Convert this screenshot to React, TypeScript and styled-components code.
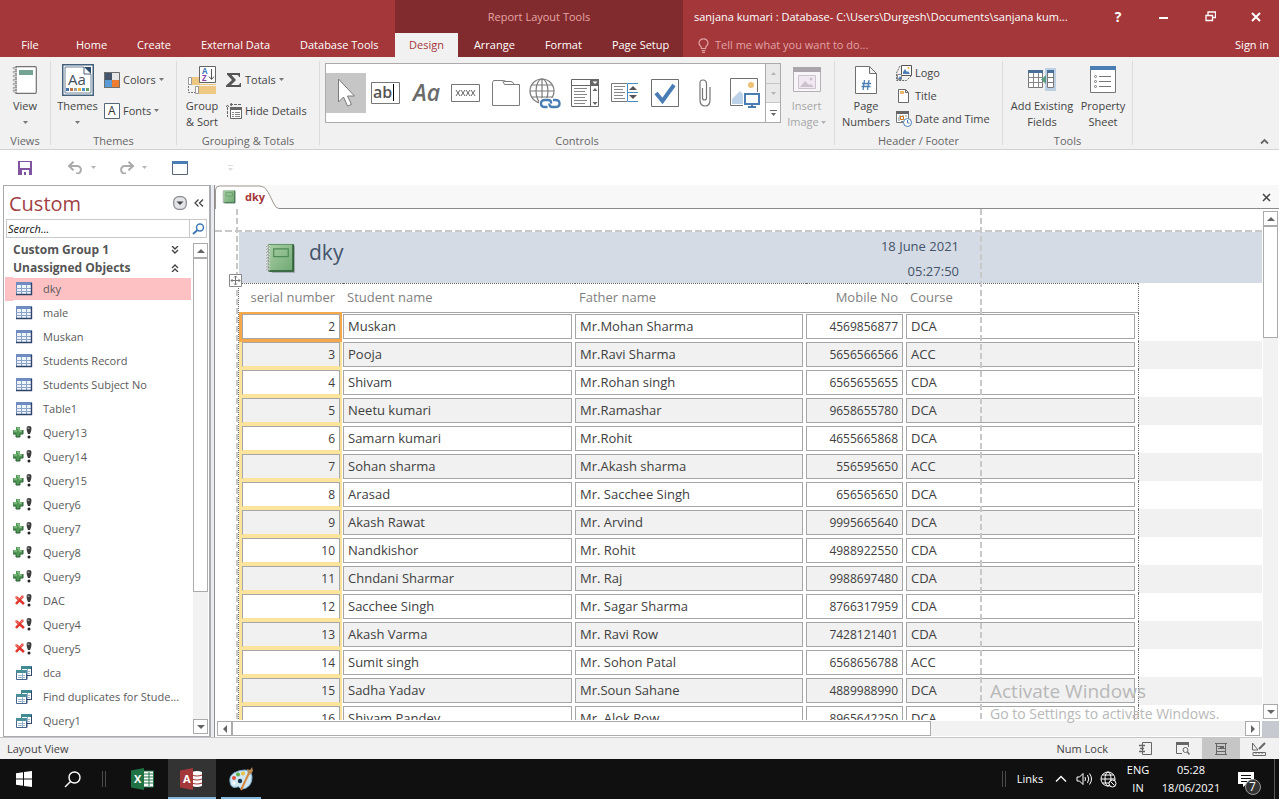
import React from 'react';
import styled, { createGlobalStyle, css } from 'styled-components';

const Global = createGlobalStyle`
  * { box-sizing: border-box; }
  body {
    margin: 0;
    background: #ffffff;
    font-family: 'Open Sans', 'Noto Sans', sans-serif;
    font-size: 11px;
    line-height: 16px;
    color: #444444;
  }
  button, input { font: inherit; color: inherit; padding: 0; margin: 0; border: 0; background: none; border-radius: 0; }
  svg { display: block; flex: none; }
`;

const Window = styled.div`
  position: relative;
  display: flex;
  flex-direction: column;
  height: 100vh;
  min-height: 480px;
  padding: 0 1px 1px 0;
  overflow: hidden;
`;

/* ---------- title bar and tabs ---------- */
const TitleBar = styled.header`
  display: flex;
  flex: none;
  height: 57px;
  background: #a4373a;
  color: #ffffff;
`;
const TitleSection = styled.div<{ $width?: number; $dark?: boolean }>`
  display: flex;
  flex-direction: column;
  min-width: 0;
  ${p => (p.$width ? css`flex: 0 0 ${p.$width}px;` : css`flex: 1;`)}
  background: ${p => (p.$dark ? '#822b2e' : 'transparent')};
`;
const TitleRow = styled.div<{ $center?: boolean }>`
  display: flex;
  align-items: center;
  justify-content: ${p => (p.$center ? 'center' : 'space-between')};
  height: 33px;
  white-space: nowrap;
`;
const ContextTitle = styled.span`
  color: #e6a5a7;
`;
const TabRow = styled.nav`
  display: flex;
  gap: 2px;
  height: 24px;
`;
const Tab = styled.button<{ $active?: boolean; $file?: boolean }>`
  height: 24px;
  padding: 0 14px;
  white-space: nowrap;
  ${p => p.$file && css`width: 60px;`}
  ${p => p.$active && css`background: #f1f1f1; color: #a4373a;`}
`;
const DocTitle = styled.span`
  padding-left: 11px;
  overflow: hidden;
  text-overflow: ellipsis;
`;
const WindowButtons = styled.div`
  display: flex;
  flex: none;
  padding-left: 12px;
`;
const WindowButton = styled.button`
  display: grid;
  place-items: center;
  width: 46px;
  height: 30px;
  font-size: 14px;
  font-weight: 700;
`;
const TellMe = styled.label`
  display: flex;
  align-items: center;
  gap: 6px;
  flex: 1;
  padding-left: 15px;
  color: #e2a3a5;
`;
const TellInput = styled.input`
  width: 240px;
  outline: none;
  &::placeholder { color: #e2a3a5; opacity: 1; }
`;
const SearchRow = styled.div`
  display: flex;
  height: 24px;
`;
const SignIn = styled.button`
  padding: 0 10px;
`;

/* ---------- ribbon ---------- */
const Ribbon = styled.div`
  display: flex;
  flex: none;
  height: 93px;
  padding-top: 4px;
  background: #f1f1f1;
  border-bottom: 1px solid #d2d2d2;
`;
const Group = styled.section<{ $width: number }>`
  display: flex;
  flex-direction: column;
  flex: 0 0 ${p => p.$width}px;
  height: 84px;
  border-right: 1px solid #dcdcdc;
`;
const GroupBody = styled.div<{ $start?: number }>`
  display: flex;
  flex: none;
  height: 72px;
  padding-left: ${p => p.$start ?? 0}px;
`;
const GroupLabel = styled.div`
  height: 12px;
  text-align: center;
  color: #666666;
`;
const BigButton = styled.button<{ $width: number; $disabled?: boolean }>`
  display: flex;
  flex-direction: column;
  align-items: center;
  width: ${p => p.$width}px;
  white-space: nowrap;
  color: ${p => (p.$disabled ? '#a6a6a6' : '#444444')};
`;
const IconSlot = styled.span`
  display: grid;
  place-items: center;
  height: 37px;
`;
const BigLine = styled.span`
  display: flex;
  align-items: center;
  gap: 2px;
  height: 16px;
`;
const SmallColumn = styled.div<{ $tight?: boolean }>`
  display: flex;
  flex-direction: column;
  padding-top: ${p => (p.$tight ? 0 : 3)}px;
  padding-left: 1px;
`;
const SmallButton = styled.button<{ $tight?: boolean }>`
  display: flex;
  align-items: center;
  gap: 3px;
  height: ${p => (p.$tight ? 23 : 31)}px;
  white-space: nowrap;
`;
const Gallery = styled.div`
  display: flex;
  width: 456px;
  height: 60px;
  margin: 2px 2px 0 0;
  background: #ffffff;
  border: 1px solid #ababab;
`;
const GalleryItem = styled.button<{ $selected?: boolean }>`
  display: grid;
  place-items: center;
  width: 40px;
  height: 40px;
  margin-top: 9px;
  background: ${p => (p.$selected ? '#c6c6c6' : 'transparent')};
`;
const GalleryScroll = styled.div`
  display: flex;
  flex-direction: column;
  width: 15px;
  margin-left: auto;
  border-left: 1px solid #ababab;
`;
const GalleryArrow = styled.button<{ $disabled?: boolean }>`
  display: grid;
  place-items: center;
  flex: 1;
  background: ${p => (p.$disabled ? '#e9e9e9' : '#ffffff')};
  & + & { border-top: 1px solid #c6c6c6; }
`;
const Collapse = styled.button`
  align-self: flex-end;
  margin: 0 10px 4px auto;
`;

const QuickBar = styled.div`
  display: flex;
  align-items: center;
  flex: none;
  height: 35px;
  padding-left: 18px;
`;
const QuickGroup = styled.div<{ $gap: number }>`
  display: flex;
  align-items: center;
  gap: 8px;
  margin-right: ${p => p.$gap}px;
`;

/* ---------- navigation pane ---------- */
const Main = styled.main`
  display: flex;
  flex: 1;
  min-height: 0;
  padding-left: 3px;
`;
const NavPane = styled.aside`
  display: flex;
  flex-direction: column;
  flex: 0 0 208px;
  border: 1px solid #a9abb1;
  border-right-width: 2px;
`;
const NavHead = styled.div`
  display: flex;
  align-items: center;
  flex: none;
  height: 33px;
  padding: 0 5px;
  gap: 7px;
`;
const NavTitle = styled.h1`
  flex: 1;
  margin: 0;
  padding-top: 2px;
  font-size: 20px;
  font-weight: 400;
  line-height: 30px;
  color: #a03f45;
`;
const SearchBox = styled.form`
  display: flex;
  flex: none;
  height: 19px;
  margin: 0 2px 3px 2px;
  border: 1px solid #c6c8cc;
`;
const SearchInput = styled.input`
  flex: 1;
  min-width: 0;
  padding-left: 1px;
  font-style: italic;
  outline: none;
  &::placeholder { color: #111111; opacity: 1; }
`;
const SearchButton = styled.button`
  display: grid;
  place-items: center;
  width: 17px;
  border-left: 1px solid #c6c8cc;
`;
const NavBody = styled.div`
  display: flex;
  flex: 1;
  min-height: 0;
  padding: 0 1px 1px;
`;
const NavList = styled.div`
  flex: 1;
  min-width: 0;
  overflow: hidden;
`;
const NavGroup = styled.button`
  display: flex;
  align-items: center;
  justify-content: space-between;
  width: 100%;
  height: 18px;
  padding: 0 12px 0 8px;
  font-size: 12px;
  font-weight: 700;
  color: #555555;
`;
const NavItem = styled.button<{ $selected?: boolean }>`
  display: flex;
  align-items: center;
  gap: 8px;
  width: 100%;
  height: 24px;
  padding: 1px 0 1px 8px;
  white-space: nowrap;
  color: #5a5a5a;
  background: ${p => (p.$selected ? '#fdc1c4' : 'transparent')} content-box;
  box-shadow: ${p => (p.$selected ? 'inset 8px 0 0 #fdc1c4' : 'none')};
`;
const NavIcon = styled.span`
  display: flex;
  width: 22px;
`;

/* ---------- scroll bars ---------- */
const VScroll = styled.div<{ $gap: number }>`
  display: flex;
  flex-direction: column;
  flex: 0 0 15px;
  margin: 2px 0 1px ${p => p.$gap}px;
  background: #f2f2f2;
`;
const HScroll = styled.div`
  display: flex;
  flex: none;
  height: 15px;
  margin: 1px 19px 1px 2px;
  background: #f2f2f2;
`;
const ScrollButton = styled.button`
  display: grid;
  place-items: center;
  flex: 0 0 15px;
  width: 15px;
  height: 15px;
  border: 1px solid #ababab;
  background: #ffffff;
`;
const Thumb = styled.div<{ $share: number }>`
  flex: 0 0 ${p => p.$share}%;
  background: #ffffff;
  border: 1px solid #ababab;
`;
const Track = styled.div`
  flex: 1;
`;

/* ---------- document ---------- */
const Splitter = styled.div`
  flex: 0 0 4px;
  background: #e9ebf0;
  border-right: 1px solid #8e9096;
`;
const DocArea = styled.section`
  display: flex;
  flex-direction: column;
  flex: 1;
  min-width: 0;
`;
const DocTabs = styled.div`
  display: flex;
  flex: none;
  height: 24px;
  background: linear-gradient(#8c8c8c, #8c8c8c) 64px 100% / 100% 1px no-repeat #f8f8f8;
`;
const DocTab = styled.button`
  position: relative;
  width: 64px;
  height: 24px;
  text-align: left;
  font-weight: 700;
  color: #a4373a;
`;
const TabShape = styled.svg`
  position: absolute;
  inset: 0;
`;
const TabFace = styled.span`
  position: relative;
  display: flex;
  align-items: center;
  gap: 9px;
  padding-left: 7px;
`;
const CloseDoc = styled.button`
  margin: 0 8px 0 auto;
`;
const DocRow = styled.div`
  display: flex;
  flex: 1;
  min-height: 0;
  padding-right: 1px;
`;
const Page = styled.div`
  position: relative;
  flex: 1;
  min-width: 0;
  overflow: hidden;
  padding: 23px 0 0 24px;
`;
const VGuide = styled.div<{ $x: number }>`
  position: absolute;
  top: 0;
  bottom: 0;
  left: ${p => p.$x}px;
  width: 2px;
  background: repeating-linear-gradient(#c8c8c8 0 6px, transparent 6px 9px);
`;
const HGuide = styled.div`
  position: absolute;
  top: 21px;
  left: 0;
  right: 0;
  height: 2px;
  background: repeating-linear-gradient(90deg, #c8c8c8 0 7px, transparent 7px 10px);
`;
const MoveHandle = styled.button`
  position: absolute;
  left: 14px;
  top: 65px;
`;
const ReportHead = styled.div`
  height: 51px;
  background: #d5dbe5;
`;
const ReportHeadInner = styled.div`
  display: flex;
  align-items: flex-start;
  width: 720px;
  height: 51px;
  padding: 1px 0 0 26px;
`;
const ReportIcon = styled.span`
  padding: 10px 13px 0 0;
`;
const ReportTitle = styled.h2`
  margin: 0;
  font-size: 21px;
  font-weight: 400;
  line-height: 38px;
  color: #44546a;
`;
const ReportDate = styled.div`
  margin-left: auto;
  padding-top: 1px;
  text-align: right;
  font-size: 13px;
  line-height: 25px;
  color: #44546a;
`;
const Grid = styled.table`
  width: calc(100% + 1px);
  margin-left: -1px;
  table-layout: fixed;
  border-collapse: separate;
  border-spacing: 0;
  border-left: 1px dotted #6a6a6a;
  font-size: 13px;
  line-height: 23px;
  color: #404040;
`;
const HeadCell = styled.th<{ $right?: boolean }>`
  height: 30px;
  padding: 0 ${p => (p.$right ? 8 : 0)}px 2px 4px;
  font-weight: 400;
  text-align: ${p => (p.$right ? 'right' : 'left')};
  white-space: nowrap;
  color: #7f7f7f;
  border-top: 1px dotted #6a6a6a;
  border-bottom: 1px solid #a6a6a6;
`;
const HeadFill = styled.th`
  padding: 0;
  border-left: 1px dotted #6a6a6a;
`;
const Row = styled.tr<{ $alt: boolean }>`
  --fill: ${p => (p.$alt ? '#f1f1f1' : '#ffffff')};
`;
const Cell = styled.td`
  height: 28px;
  padding: 1px 3px 2px 0;
`;
const FillCell = styled.td`
  padding: 0;
  background: var(--fill);
  border-left: 1px dotted #6a6a6a;
`;
const Box = styled.div<{ $right?: boolean }>`
  height: 25px;
  padding: 0 4px;
  overflow: hidden;
  white-space: nowrap;
  background: var(--fill);
  border: 1px solid #a6a6a6;
  text-align: ${p => (p.$right ? 'right' : 'left')};
  font-size: ${p => (p.$right ? 12 : 13)}px;
`;
const SerialCell = styled.td`
  height: 28px;
  padding: 0 1px 0 0;
`;
const SerialFrame = styled.div<{ $selected: boolean }>`
  position: relative;
  height: 28px;
  padding: 1px 2px 2px 3px;
  background: #fce49c;
  ${p => p.$selected ? css`
    z-index: 1;
    background: #f5a94a;
    box-shadow: 0 -1px 0 #f5a94a, 0 1px 0 #f5a94a;
  ` : css`
    & > div { border-bottom-color: #fce49c; }
  `}
`;
const Corner = styled.div`
  position: absolute;
  right: 1px;
  bottom: 63px;
  width: 17px;
  height: 16px;
  background: #c6c9d0;
`;

/* ---------- status bar, task bar ---------- */
const Status = styled.footer`
  display: flex;
  align-items: center;
  flex: none;
  height: 22px;
  padding: 0 1px 0 7px;
  background: #f1f1f1;
  border-top: 1px solid #c6c6c6;
`;
const NumLock = styled.span`
  margin: 0 18px 0 auto;
`;
const ViewButton = styled.button<{ $active?: boolean }>`
  display: grid;
  place-items: center;
  width: 38px;
  height: 21px;
  background: ${p => (p.$active ? '#c6c6c6' : 'transparent')};
`;
const Taskbar = styled.div`
  display: flex;
  align-items: center;
  flex: none;
  height: 40px;
  background: #101010;
  color: #ffffff;
`;
const TaskButton = styled.button<{ $active?: boolean; $running?: boolean; $width?: number }>`
  display: grid;
  place-items: center;
  width: ${p => p.$width ?? 48}px;
  height: 40px;
  background: ${p => (p.$active ? '#333333' : 'transparent')};
  ${p => p.$running && css`box-shadow: inset 0 -2px 0 #83b9dd;`}
`;
const Divider = styled.span`
  width: 4px;
  height: 16px;
  border: 1px solid #4a4a4a;
  border-width: 0 1px;
`;
const Tray = styled.div`
  display: flex;
  align-items: center;
  margin-left: auto;
`;
const TrayButton = styled.button<{ $width: number; $end?: number }>`
  display: grid;
  place-items: center;
  width: ${p => p.$width}px;
  height: 40px;
  padding-right: ${p => p.$end ?? 0}px;
  line-height: 18px;
`;
const PeekEdge = styled.span`
  width: 5px;
  height: 40px;
  border-left: 1px solid #5a5a5a;
`;
const Badge = styled.span`
  position: absolute;
  left: 7px;
  top: 7px;
  width: 16px;
  height: 16px;
  border-radius: 8px;
  border: 1px solid #9a9a9a;
  background: #333333;
  font-size: 12px;
  line-height: 14px;
`;
const BadgeHost = styled.span`
  position: relative;
  display: block;
`;
const Watermark = styled.div`
  position: absolute;
  right: 53px;
  bottom: 76px;
  color: #b8b8b8;
  pointer-events: none;
  white-space: nowrap;
  width: 237px;
`;
const WatermarkTitle = styled.div`
  font-size: 19px;
  line-height: 26px;
`;
const WatermarkText = styled.div`
  font-size: 14px;
  line-height: 20px;
`;

/* ---------- icons ---------- */
const Svg = ({ w, h, children }: { w: number; h: number; children: React.ReactNode }) => (
  <svg width={w} height={h} viewBox={`0 0 ${w} ${h}`} fill="none" aria-hidden="true">{children}</svg>
);
const Caret = ({ color = '#777777' }: { color?: string }) => (
  <Svg w={5} h={3}><path d="M0 0h5L2.500 3z" fill={color} /></Svg>
);
const Arrow = ({ dir, color = '#666666' }: { dir: 'up' | 'down' | 'left' | 'right'; color?: string }) => {
  const d = { up: 'M0 6h8L4 2z', down: 'M0 2h8L4 6z', left: 'M6 0v8L2 4z', right: 'M2 0v8l4-4z' }[dir];
  return <Svg w={8} h={8}><path d={d} fill={color} /></Svg>;
};
const ViewIcon = () => (
  <Svg w={26} h={28}>
    <path d="M4 .7h19.300q1 0 1 1v24.600q0 1-1 1H4z" fill="#fff" stroke="#737373" strokeWidth="1.200" />
    <rect x="7" y="4" width="14" height="5" fill="#74a393" />
    {[1, 5, 9, 13, 17, 21, 24].map(y => <path key={y} d={`M5 ${y + 2}H2q-1 0-1-1t1-.5h3`} stroke="#8a8a8a" fill="#fff" strokeWidth=".8" />)}
  </Svg>
);
const ThemesIcon = () => (
  <Svg w={32} h={32}>
    <rect x=".75" y=".75" width="30.500" height="30.500" fill="#fff" stroke="#44617c" strokeWidth="1.500" />
    <path d="M3 29V3h19l7 7v19z" fill="#fff" stroke="#6f8598" />
    <path d="M22 3l7 7V3z" fill="#2d4a68" /><path d="M22 3v7h7" fill="#fff" stroke="#44617c" />
    <text x="6" y="21" fontFamily="Open Sans, sans-serif" fontSize="15" fill="#44505c">Aa</text>
    {['#4472a8', '#c07040', '#9ba0a8', '#e8b33c', '#4a90c8', '#60a060'].map((c, i) => <rect key={c} x={4 + i * 4} y="24" width="3" height="3" fill={c} />)}
  </Svg>
);
const ColorsIcon = () => (
  <Svg w={16} h={16}>
    <path d="M0 0h8v8H0z" fill="#44546a" /><path d="M8 0h8v8H8z" fill="#e7e6e6" />
    <path d="M0 8h8v8H0z" fill="#5b9bd5" /><path d="M8 8h8v8H8z" fill="#ed7d31" />
    <path d="M.5.500h15v15H.500z" stroke="#6f6f6f" />
  </Svg>
);
const FontsIcon = () => (
  <Svg w={16} h={16}>
    <path d="M.5.500h15v15H.500z" fill="#fff" stroke="#56677a" />
    <text x="4" y="12" fontFamily="Open Sans, sans-serif" fontSize="12" fill="#333">A</text>
  </Svg>
);
const GroupSortIcon = () => (
  <Svg w={28} h={28}>
    <path d="M4 11h8v8H4zM10 20h18v8H10zM12 18h16v1H12z" fill="#ecc883" />
    <path d="M.5 11.500h3v7h-3z" fill="#fff" stroke="#999" />
    <path d="M.5 20v6.500H7" stroke="#777" strokeDasharray="2 1" /><path d="M7.500 20.500h3v7h-3z" fill="#fff" stroke="#999" />
    <path d="M11.500.500h16v16h-16z" fill="#fff" stroke="#666" />
    <text x="14" y="8" fontFamily="Open Sans, sans-serif" fontWeight="700" fontSize="8" fill="#4a7ebb">A</text>
    <text x="14" y="15" fontFamily="Open Sans, sans-serif" fontWeight="700" fontSize="8" fill="#8e44ad">Z</text>
    <path d="M23.500 3v10M21 10.500l2.500 3 2.500-3" stroke="#555" />
  </Svg>
);
const SigmaIcon = () => (
  <Svg w={16} h={16}><path d="M1 1h13v4h-1q0-2-2-2H5.500L10 8l-5 5h7q2 0 2-2h1v4H0v-1.500L6 8 1 2.500z" fill="#555" /></Svg>
);
const HideDetailsIcon = () => (
  <Svg w={16} h={16}>
    <path d="M4 1.500h11" stroke="#666" strokeDasharray="3 1" /><path d="M6 0L4 1.500 6 3" stroke="#666" />
    <path d="M1.500 4v10" stroke="#666" strokeDasharray="3 1" /><path d="M0 4l1.500-2L3 4" stroke="#666" />
    <path d="M4.500 4.500h11v11h-11z" fill="#fff" stroke="#666" /><path d="M4 4h12v3H4z" fill="#666" />
    <path d="M6 9.500h2M6 11.500h2M6 13.500h2M9 9.500h5M9 11.500h5M9 13.500h5" stroke="#888" />
  </Svg>
);
const PointerIcon = () => (
  <Svg w={20} h={30}><path d="M2.500 1v23l5-5 4 9 4-1.500-4-8.500h7z" fill="#fff" stroke="#7a7a7a" /></Svg>
);
const TextBoxIcon = () => (
  <Svg w={29} h={22}>
    <path d="M.5.500h28v21H.500z" fill="#fff" stroke="#777" />
    <text x="2" y="16" fontFamily="Open Sans, sans-serif" fontSize="16" fontWeight="600" fill="#555">ab</text>
    <path d="M22.500 2v17" stroke="#000" />
  </Svg>
);
const LabelIcon = () => (
  <Svg w={34} h={34}>
    <text x="4" y="25" fontFamily="Open Sans, sans-serif" fontSize="23" fontStyle="italic" fontWeight="600" fill="#6a6a6a">Aa</text>
  </Svg>
);
const ButtonIcon = () => (
  <Svg w={29} h={18}>
    <path d="M.5.500h28v17H.500z" fill="#fff" stroke="#777" />
    <path d="M5 6l4 6M9 6l-4 6M10 6l4 6M14 6l-4 6M15 6l4 6M19 6l-4 6M20 6l4 6M24 6l-4 6" stroke="#666" />
  </Svg>
);
const TabControlIcon = () => (
  <Svg w={28} h={26}>
    <path d="M.5 25.500V2.500l1-2h9l2 4h15v21z" stroke="#7c7c7c" /><path d="M12 1.500h7q2 0 3 3M10.500.500l3 .5" stroke="#7c7c7c" />
  </Svg>
);
const HyperlinkIcon = () => (
  <Svg w={32} h={31}>
    <g stroke="#7c7c7c" strokeWidth="1.200">
      <circle cx="13" cy="13" r="12" /><ellipse cx="13" cy="13" rx="6" ry="12" />
      <path d="M13 1v24M1 13h24M3 7h20M3 19h20" />
    </g>
    <path d="M10 25q0-5 5-5h12q5 0 5 5v6H10z" fill="#fff" />
    <g stroke="#4a7db3" strokeWidth="2.400">
      <path d="M22 25.500q.5-3.500-3-3.500h-3q-4 0-4 3.500t4 3.500h2.500" />
      <path d="M20.500 25.500q-.5 3.500 3 3.500h3q4 0 4-3.500t-4-3.500H24" />
    </g>
  </Svg>
);
const ComboIcon = () => (
  <Svg w={28} h={28}>
    <path d="M.5.500h27v27H.500zM0 6.500h28M19.500 0v28" fill="#fff" stroke="#666" /><path d="M20 0h8v7h-8z" fill="#666" />
    <path d="M21.500 2.500h5L24 5z" fill="#fff" /><path d="M21.500 12h5L24 9zM21.500 23h5L24 26z" fill="#666" />
    <path d="M3 9.500h13M3 12.500h11M3 15.500h13M3 18.500h11M3 21.500h13M3 24.500h11" stroke="#888" />
  </Svg>
);
const ListIcon = () => (
  <Svg w={28} h={20}>
    <path d="M16 .5H.500v18H16" stroke="#777" /><path d="M27 .5H16.500v18H27M16 9.500h11" stroke="#4a8ac0" />
    <path d="M18 7h8l-4-4zM18 12h8l-4 4z" fill="#555" />
    <path d="M3 3.500h11M3 6.500h9M3 9.500h11M3 12.500h9M3 15.500h11" stroke="#888" />
  </Svg>
);
const CheckIcon = () => (
  <Svg w={28} h={28}><path d="M.5.500h27v27H.500z" fill="#fff" stroke="#6f6f6f" /><path d="M5 14l6.500 8L23 6" stroke="#4a7db3" strokeWidth="4" /></Svg>
);
const ClipIcon = () => (
  <Svg w={12} h={28}><path d="M3.500 9v10q0 2 2 2t2-2V5q0-4-3.500-4T1 5v16q0 6 5 6t5-6V8" stroke="#757575" strokeWidth="1.200" /></Svg>
);
const ImageControlIcon = () => (
  <Svg w={31} h={30}>
    <path d="M.5.500h27v27H.500z" fill="#fff" stroke="#6f6f6f" /><circle cx="21" cy="7" r="3" fill="#ecc275" />
    <path d="M2 26V21l8-8 8 8v5z" fill="#bcd2e8" /><path d="M13 14h18v16H13z" fill="#fff" />
    <path d="M15 16h14v10H15z" stroke="#4a7db3" strokeWidth="2" /><path d="M18 29h8M22 27v2" stroke="#4a7db3" strokeWidth="2" />
  </Svg>
);
const InsertImageIcon = () => (
  <Svg w={28} h={26}>
    <path d="M.5.500h27v24H.500z" fill="#f8f5f9" stroke="#b5b0b5" /><path d="M0 0h28v5H0z" fill="#aaa5aa" />
    <path d="M5.500 8.500h17v13h-17z" fill="#f0e9f1" stroke="#ccc2cd" /><circle cx="18" cy="12" r="1.500" fill="#ccc2cd" /><path d="M7 20l5-6 4 4 2-1 3 3z" fill="#ccc2cd" />
  </Svg>
);
const PageNumberIcon = () => (
  <Svg w={22} h={28}>
    <path d="M.5.500h14l7 7v20H.500zM14.500.500v7h7" fill="#fff" stroke="#6f6f6f" />
    <path d="M9.500 14l-1.500 10M14 14l-1.500 10M7 17.500h9M6.500 20.500h9" stroke="#4a7db3" strokeWidth="1.300" />
  </Svg>
);
const LogoIcon = () => (
  <Svg w={16} h={16}>
    <path d="M4 1L.5 8v7.500h10L15 11" stroke="#666" strokeDasharray="2 1" /><path d="M5.500.500h10v10h-10z" fill="#fff" stroke="#555" />
    <path d="M7 9V7l2-3 2 3 1-1 2 3z" fill="#4a7db3" /><circle cx="12.500" cy="3" r="1" fill="#e7b64a" />
    <path d="M1.500 9.500h4v5h-4z" fill="#fff" stroke="#888" /><path d="M2 14l2-3 2 3z" fill="#4a7db3" />
  </Svg>
);
const TitleIcon = () => (
  <Svg w={16} h={14}><path d="M2.500.500h7l3 3v10h-10zM9.500.500v3h3" fill="#fff" stroke="#6a6a6a" /><path d="M4 2h4v3H4z" fill="#ecb56a" /></Svg>
);
const DateIcon = () => (
  <Svg w={16} h={16}>
    <path d="M.5.500h12v11H.500z" fill="#fff" stroke="#777" /><path d="M0 0h13v3H0z" fill="#666" />
    <path d="M3 5h2M6 5h2M9 5h2M2 7h2M2 9h2M5 10.500h2" stroke="#888" /><path d="M4.500 5.500h3v3h-3z" stroke="#c5722e" />
    <circle cx="11.500" cy="11.500" r="4" fill="#fff" stroke="#4a7db3" /><path d="M11.500 9v3h2" stroke="#4a7db3" />
  </Svg>
);
const AddFieldsIcon = () => (
  <Svg w={28} h={23}>
    <path d="M.5 2.500h14v17H.500z" fill="#fff" stroke="#777" /><path d="M0 2h15v3H0z" fill="#4a7099" />
    <path d="M5.500 5v15M10.500 5v15M0 9.500h15M0 14.500h15" stroke="#888" /><path d="M17 0h11v23H17z" fill="#bdd0e3" />
    <path d="M19.500 2.500h6v17h-6zM19 9.500h6M19 14.500h6" fill="#fff" stroke="#777" /><path d="M19 2h7v3h-7z" fill="#4a7099" />
    <path d="M18 7v9l-5-4.500z" fill="#5a9a80" />
  </Svg>
);
const PropertyIcon = () => (
  <Svg w={26} h={27}>
    <path d="M.5.500h25v26H.500z" fill="#fff" stroke="#777" /><path d="M0 0h26v4H0z" fill="#4a7db3" />
    <g stroke="#777"><circle cx="5.500" cy="10.500" r="1" /><circle cx="5.500" cy="15.500" r="1" /><circle cx="5.500" cy="20.500" r="1" /><path d="M9 10.500h12M9 15.500h12M9 20.500h12" /></g>
  </Svg>
);
const SaveIcon = () => (
  <Svg w={15} h={14}><path d="M0 0h14v14H0z" fill="#8154a1" /><path d="M2 1h10v6H2zM4 9h7v5H4z" fill="#fff" /><path d="M6 11h2v3H6z" fill="#8154a1" /></Svg>
);
const UndoIcon = () => (
  <Svg w={15} h={13}><path d="M1 5h7.500a3.800 3.800 0 1 1 0 7.500H8M5.500.800L1 5l4.500 4.200" stroke="#ababab" strokeWidth="2" /></Svg>
);
const RedoIcon = () => (
  <Svg w={15} h={13}><path d="M14 5H6.500a3.800 3.800 0 1 0 0 7.500H7M9.500.800L14 5 9.500 9.200" stroke="#ababab" strokeWidth="2" /></Svg>
);
const FormIcon = () => (
  <Svg w={16} h={14}><path d="M.5.500h15v13H.500z" fill="#fff" stroke="#56677a" /><path d="M0 0h16v3H0z" fill="#4a7db3" /></Svg>
);
const TableIcon = () => (
  <Svg w={22} h={15}>
    <path d="M3.500.500h15v12h-15z" fill="#eef4fc" stroke="#6d87b4" /><path d="M3 0h16v3H3z" fill="#6f8cc0" />
    <path d="M8.500 3v10M13.500 3v10M3 6.500h16M3 9.500h16" stroke="#8ba4cc" /><path d="M18.500 1v11.500H3" stroke="#2f4468" strokeWidth="1.400" />
  </Svg>
);
const Bang = () => (
  <><path d="M13.500 2q0-2 2.500-2t2.500 2q0 3-1.500 6h-2q-1.500-3-1.500-6z" fill="#3a3a3a" /><circle cx="15.500" cy="2.200" r="1" fill="#9a9a9a" /><circle cx="16" cy="11" r="1.500" fill="#222" /></>
);
const AppendIcon = () => (
  <Svg w={22} h={14}>
    <path d="M3 1h4v3h3v4H7v3H3V8H0V4h3z" fill="#4f9a55" /><path d="M4 2h2v3h3M1 5h3" stroke="#9fce9f" /><path d="M0 8h3v3h4V8h3V4" stroke="#2a5a32" /><Bang />
  </Svg>
);
const DeleteIcon = () => (
  <Svg w={22} h={14}><path d="M3 3l8 7M10 2l-7 8" stroke="#e0352b" strokeWidth="2.600" /><path d="M2 2.500l4 3M10 1.500L7.500 5" stroke="#f58d80" /><Bang /></Svg>
);
const QueryIcon = () => (
  <Svg w={22} h={14}>
    <path d="M8.500.500h10v9h-10z" fill="#fff" stroke="#3c7382" /><path d="M8 0h11v3H8z" fill="#3f8a93" /><path d="M10 5.500h7M10 7.500h7M14.500 3v6" stroke="#9db6cf" />
    <path d="M3.500 4.500h10v9h-10z" fill="#fff" stroke="#46658c" /><path d="M3 4h11v3H3z" fill="#4b8f9a" /><path d="M5 9.500h7M5 11.500h7M9.500 7v6" stroke="#9db6cf" /><path d="M14 13.500V9.500h4.500V1" stroke="#2b4468" />
  </Svg>
);
const Double = ({ up }: { up?: boolean }) => (
  <Svg w={8} h={8}><path d={up ? 'M1 4l3-3 3 3M1 8l3-3 3 3' : 'M1 0l3 3 3-3M1 4l3 3 3-3'} stroke="#444" strokeWidth="1.400" /></Svg>
);
const BookIcon = ({ size }: { size: number }) => (
  <svg width={size} height={size} viewBox="0 0 32 32" fill="none" aria-hidden="true">
    <defs>
      <linearGradient id={`cover${size}`} x1="0" y1="0" x2="1" y2="1">
        <stop offset="0" stopColor="#a9cfa5" /><stop offset="1" stopColor="#6fa873" />
      </linearGradient>
    </defs>
    <path d="M7 3h24v28H7z" fill="#5a6a70" opacity=".4" />
    <path d="M3.500 1.500h26v27.500h-26z" fill={`url(#cover${size})`} stroke="#5c9463" />
    <path d="M29 1.500v27.500H4" stroke="#2b5a35" strokeWidth="1.600" />
    <path d="M9 6h15v8H9z" stroke="#4d8a55" strokeWidth="1.200" />
    {[3, 6, 9, 12, 15, 18, 21, 24, 27].map(y => <path key={y} d={`M1 ${y + 1}q2-3 4 0`} stroke="#f4f6f4" strokeWidth="1.600" />)}
    {[3, 6, 9, 12, 15, 18, 21, 24, 27].map(y => <path key={y} d={`M1 ${y + 1}q2-3 4 0`} stroke="#666" strokeWidth=".7" />)}
  </svg>
);

/* ---------- data ---------- */
const navItems: [string, () => React.ReactElement][] = [
  ['dky', TableIcon], ['male', TableIcon], ['Muskan', TableIcon], ['Students Record', TableIcon],
  ['Students Subject No', TableIcon], ['Table1', TableIcon], ['Query13', AppendIcon], ['Query14', AppendIcon],
  ['Query15', AppendIcon], ['Query6', AppendIcon], ['Query7', AppendIcon], ['Query8', AppendIcon],
  ['Query9', AppendIcon], ['DAC', DeleteIcon], ['Query4', DeleteIcon], ['Query5', DeleteIcon],
  ['dca', QueryIcon], ['Find duplicates for Stude...', QueryIcon], ['Query1', QueryIcon],
];
const students: [number, string, string, string, string][] = [
  [2, 'Muskan', 'Mr.Mohan Sharma', '4569856877', 'DCA'],
  [3, 'Pooja', 'Mr.Ravi Sharma', '5656566566', 'ACC'],
  [4, 'Shivam', 'Mr.Rohan singh', '6565655655', 'CDA'],
  [5, 'Neetu kumari', 'Mr.Ramashar', '9658655780', 'DCA'],
  [6, 'Samarn kumari', 'Mr.Rohit', '4655665868', 'DCA'],
  [7, 'Sohan sharma', 'Mr.Akash sharma', '556595650', 'ACC'],
  [8, 'Arasad', 'Mr. Sacchee Singh', '656565650', 'DCA'],
  [9, 'Akash Rawat', 'Mr. Arvind', '9995665640', 'DCA'],
  [10, 'Nandkishor', 'Mr. Rohit', '4988922550', 'CDA'],
  [11, 'Chndani Sharmar', 'Mr. Raj', '9988697480', 'CDA'],
  [12, 'Sacchee Singh', 'Mr. Sagar Sharma', '8766317959', 'CDA'],
  [13, 'Akash Varma', 'Mr. Ravi Row', '7428121401', 'CDA'],
  [14, 'Sumit singh', 'Mr. Sohon Patal', '6568656788', 'ACC'],
  [15, 'Sadha Yadav', 'Mr.Soun Sahane', '4889988990', 'DCA'],
  [16, 'Shivam Pandey', 'Mr. Alok Row', '8965642250', 'DCA'],
];
const galleryIcons: [string, () => React.ReactElement][] = [
  ['Select', PointerIcon], ['Text box', TextBoxIcon], ['Label', LabelIcon], ['Button', ButtonIcon],
  ['Tab control', TabControlIcon], ['Hyperlink', HyperlinkIcon], ['Combo box', ComboIcon], ['List box', ListIcon],
  ['Check box', CheckIcon], ['Attachment', ClipIcon], ['Image', ImageControlIcon],
];

const Header = () => (
  <TitleBar>
    <TitleSection $width={395}>
      <TitleRow />
      <TabRow>
        <Tab $file>File</Tab><Tab>Home</Tab><Tab>Create</Tab><Tab>External Data</Tab><Tab>Database Tools</Tab>
      </TabRow>
    </TitleSection>
    <TitleSection $width={288} $dark>
      <TitleRow $center><ContextTitle>Report Layout Tools</ContextTitle></TitleRow>
      <TabRow><Tab $active>Design</Tab><Tab>Arrange</Tab><Tab>Format</Tab><Tab>Page Setup</Tab></TabRow>
    </TitleSection>
    <TitleSection>
      <TitleRow>
        <DocTitle>sanjana kumari : Database- C:\Users\Durgesh\Documents\sanjana kum...</DocTitle>
        <WindowButtons>
          <WindowButton aria-label="Help">?</WindowButton>
          <WindowButton aria-label="Minimize"><Svg w={10} h={10}><path d="M0 6h9" stroke="#fff" strokeWidth="2" /></Svg></WindowButton>
          <WindowButton aria-label="Restore"><Svg w={11} h={11}><path d="M1 4.500h6.500v5H1z" stroke="#fff" strokeWidth="1.300" /><path d="M3 4V1h7.500v5.500H8" stroke="#fff" strokeWidth="1.300" /></Svg></WindowButton>
          <WindowButton aria-label="Close"><Svg w={10} h={10}><path d="M1 1l8 8M9 1L1 9" stroke="#fff" strokeWidth="2" /></Svg></WindowButton>
        </WindowButtons>
      </TitleRow>
      <SearchRow>
        <TellMe>
          <Svg w={11} h={15}><path d="M3.500 10.500q0-2-1.500-3A4 4 0 0 1 5.500 1 4 4 0 0 1 9 7.500q-1.500 1-1.500 3zM3.500 12.500h4M4 14.300h3" stroke="#e2a3a5" strokeWidth="1.200" /></Svg>
          <TellInput placeholder="Tell me what you want to do..." />
        </TellMe>
        <SignIn>Sign in</SignIn>
      </SearchRow>
    </TitleSection>
  </TitleBar>
);

const RibbonBar = () => (
  <Ribbon>
    <Group $width={51}>
      <GroupBody><BigButton $width={50}><IconSlot><ViewIcon /></IconSlot><BigLine>View</BigLine><BigLine><Caret /></BigLine></BigButton></GroupBody>
      <GroupLabel>Views</GroupLabel>
    </Group>
    <Group $width={126}>
      <GroupBody $start={1}>
        <BigButton $width={51}><IconSlot><ThemesIcon /></IconSlot><BigLine>Themes</BigLine><BigLine><Caret /></BigLine></BigButton>
        <SmallColumn>
          <SmallButton><ColorsIcon />Colors<Caret /></SmallButton>
          <SmallButton><FontsIcon />Fonts<Caret /></SmallButton>
        </SmallColumn>
      </GroupBody>
      <GroupLabel>Themes</GroupLabel>
    </Group>
    <Group $width={143}>
      <GroupBody $start={2}>
        <BigButton $width={46}><IconSlot><GroupSortIcon /></IconSlot><BigLine>Group</BigLine><BigLine>&amp; Sort</BigLine></BigButton>
        <SmallColumn>
          <SmallButton><SigmaIcon />Totals<Caret /></SmallButton>
          <SmallButton><HideDetailsIcon />Hide Details</SmallButton>
        </SmallColumn>
      </GroupBody>
      <GroupLabel>Grouping &amp; Totals</GroupLabel>
    </Group>
    <Group $width={515}>
      <GroupBody $start={5}>
        <Gallery>
          {galleryIcons.map(([name, Icon], i) => <GalleryItem key={name} aria-label={name} $selected={i === 0}><Icon /></GalleryItem>)}
          <GalleryScroll>
            <GalleryArrow $disabled aria-label="Previous row"><Svg w={5} h={3}><path d="M0 3h5L2.500 0z" fill="#b5b5b5" /></Svg></GalleryArrow>
            <GalleryArrow $disabled aria-label="Next row"><Caret color="#b5b5b5" /></GalleryArrow>
            <GalleryArrow aria-label="More controls"><Svg w={7} h={6}><path d="M0 .5h7" stroke="#666" /><path d="M1 3h5L3.500 6z" fill="#666" /></Svg></GalleryArrow>
          </GalleryScroll>
        </Gallery>
        <BigButton $width={47} $disabled><IconSlot><InsertImageIcon /></IconSlot><BigLine>Insert</BigLine><BigLine>Image<Caret color="#b0b0b0" /></BigLine></BigButton>
      </GroupBody>
      <GroupLabel>Controls</GroupLabel>
    </Group>
    <Group $width={168}>
      <GroupBody $start={2}>
        <BigButton $width={58}><IconSlot><PageNumberIcon /></IconSlot><BigLine>Page</BigLine><BigLine>Numbers</BigLine></BigButton>
        <SmallColumn $tight>
          <SmallButton $tight><LogoIcon />Logo</SmallButton>
          <SmallButton $tight><TitleIcon />Title</SmallButton>
          <SmallButton $tight><DateIcon />Date and Time</SmallButton>
        </SmallColumn>
      </GroupBody>
      <GroupLabel>Header / Footer</GroupLabel>
    </Group>
    <Group $width={130}>
      <GroupBody $start={3}>
        <BigButton $width={72}><IconSlot><AddFieldsIcon /></IconSlot><BigLine>Add Existing</BigLine><BigLine>Fields</BigLine></BigButton>
        <BigButton $width={50}><IconSlot><PropertyIcon /></IconSlot><BigLine>Property</BigLine><BigLine>Sheet</BigLine></BigButton>
      </GroupBody>
      <GroupLabel>Tools</GroupLabel>
    </Group>
    <Collapse aria-label="Collapse the ribbon"><Svg w={9} h={7}><path d="M1 5.500l3.500-3.500L8 5.500" stroke="#666" strokeWidth="1.800" /></Svg></Collapse>
  </Ribbon>
);

const QuickAccess = () => (
  <QuickBar>
    <QuickGroup $gap={35}><button aria-label="Save"><SaveIcon /></button></QuickGroup>
    <QuickGroup $gap={23}><button aria-label="Undo"><UndoIcon /></button><Caret color="#b5b5b5" /></QuickGroup>
    <QuickGroup $gap={25}><button aria-label="Redo"><RedoIcon /></button><Caret color="#b5b5b5" /></QuickGroup>
    <QuickGroup $gap={40}><button aria-label="Form view"><FormIcon /></button></QuickGroup>
    <button aria-label="Customize"><Svg w={5} h={6}><path d="M0 .5h5" stroke="#dedede" /><path d="M0 3h5L2.500 6z" fill="#dedede" /></Svg></button>
  </QuickBar>
);

const Navigation = () => (
  <NavPane>
    <NavHead>
      <NavTitle>Custom</NavTitle>
      <button aria-label="Pane options">
        <Svg w={14} h={14}><rect x=".7" y=".7" width="12.600" height="12.600" rx="5" fill="#e3e4e8" stroke="#85878d" strokeWidth="1.200" /><path d="M3.500 5.500h7L7 9z" fill="#444" /></Svg>
      </button>
      <button aria-label="Close pane"><Svg w={10} h={8}><path d="M4.500.500L1 4l3.500 3.500M9 .5L5.500 4 9 7.500" stroke="#444" strokeWidth="1.300" /></Svg></button>
    </NavHead>
    <SearchBox>
      <SearchInput placeholder="Search..." aria-label="Search" />
      <SearchButton type="button" aria-label="Run search"><Svg w={13} h={12}><circle cx="8" cy="4.500" r="3.500" stroke="#3f78b5" strokeWidth="1.500" /><path d="M5.500 7L1 11" stroke="#3f78b5" strokeWidth="2" /></Svg></SearchButton>
    </SearchBox>
    <NavBody>
      <NavList>
        <NavGroup>Custom Group 1<Double /></NavGroup>
        <NavGroup>Unassigned Objects<Double up /></NavGroup>
        {navItems.map(([name, Icon], i) => (
          <NavItem key={name} $selected={i === 0}><NavIcon><Icon /></NavIcon>{name}</NavItem>
        ))}
      </NavList>
      <VScroll $gap={2}>
        <ScrollButton aria-label="Scroll up"><Arrow dir="up" /></ScrollButton>
        <Thumb $share={68} />
        <Track />
        <ScrollButton aria-label="Scroll down"><Arrow dir="down" /></ScrollButton>
      </VScroll>
    </NavBody>
  </NavPane>
);

const Report = () => (
  <Page>
    <ReportHead>
      <ReportHeadInner>
        <ReportIcon><BookIcon size={31} /></ReportIcon>
        <ReportTitle>dky</ReportTitle>
        <ReportDate>18 June 2021<br />05:27:50</ReportDate>
      </ReportHeadInner>
    </ReportHead>
    <Grid>
      <colgroup>
        <col width="104" /><col width="232" /><col width="231" /><col width="100" /><col width="232" /><col />
      </colgroup>
      <thead>
        <tr>
          <HeadCell $right>serial number</HeadCell><HeadCell>Student name</HeadCell><HeadCell>Father name</HeadCell>
          <HeadCell $right>Mobile No</HeadCell><HeadCell>Course</HeadCell><HeadFill />
        </tr>
      </thead>
      <tbody>
        {students.map(([id, name, father, mobile, course], i) => (
          <Row key={id} $alt={i % 2 === 1}>
            <SerialCell><SerialFrame $selected={i === 0}><Box $right>{id}</Box></SerialFrame></SerialCell>
            <Cell><Box>{name}</Box></Cell>
            <Cell><Box>{father}</Box></Cell>
            <Cell><Box $right>{mobile}</Box></Cell>
            <Cell><Box>{course}</Box></Cell>
            <FillCell />
          </Row>
        ))}
      </tbody>
    </Grid>
    <HGuide />
    <VGuide $x={21} />
    <VGuide $x={765} />
    <MoveHandle aria-label="Select layout">
      <Svg w={13} h={13}><path d="M.5.500h12v12H.500z" fill="#fff" stroke="#8a8a8a" /><path d="M6.500 2v9M2 6.500h9M5 3.500L6.500 2 8 3.500M5 9.500L6.500 11 8 9.500M3.500 5L2 6.500 3.500 8M9.500 5L11 6.500 9.500 8" stroke="#777" /></Svg>
    </MoveHandle>
  </Page>
);

const Document = () => (
  <DocArea>
    <DocTabs>
      <DocTab>
        <TabShape width="64" height="24" viewBox="0 0 64 24" fill="none"><path d="M.5 24V5q0-4 4-4H45q5 0 8 6l6 12q2 4.500 5 4.500" fill="#fff" stroke="#a0978f" /></TabShape>
        <TabFace><BookIcon size={14} />dky</TabFace>
      </DocTab>
      <CloseDoc aria-label="Close document"><Svg w={9} h={9}><path d="M1 1l7 7M8 1L1 8" stroke="#444" strokeWidth="1.500" /></Svg></CloseDoc>
    </DocTabs>
    <DocRow>
      <Report />
      <VScroll $gap={1}>
        <ScrollButton aria-label="Scroll up"><Arrow dir="up" /></ScrollButton>
        <Thumb $share={22} />
        <Track />
        <ScrollButton aria-label="Scroll down"><Arrow dir="down" /></ScrollButton>
      </VScroll>
    </DocRow>
    <HScroll>
      <ScrollButton aria-label="Scroll left"><Arrow dir="left" /></ScrollButton>
      <Thumb $share={67} />
      <Track />
      <ScrollButton aria-label="Scroll right"><Arrow dir="right" /></ScrollButton>
    </HScroll>
  </DocArea>
);

const StatusBar = () => (
  <Status>
    Layout View
    <NumLock>Num Lock</NumLock>
    <ViewButton aria-label="Report view"><Svg w={13} h={13}><path d="M3.500.500h9v12h-9z" stroke="#666" /><path d="M0 3.500h6M0 9.500h6M1 6.500h4" stroke="#666" strokeWidth="1.400" /></Svg></ViewButton>
    <ViewButton aria-label="Print preview"><Svg w={14} h={13}><path d="M6 11.500H.500v-11h12V5" stroke="#666" /><path d="M0 0h13v3H0z" fill="#666" /><circle cx="9.500" cy="8" r="2.500" stroke="#666" /><path d="M11.500 10l2 2.500" stroke="#666" strokeWidth="1.500" /></Svg></ViewButton>
    <ViewButton $active aria-label="Layout view"><Svg w={12} h={12}><path d="M0 .5h12M0 11.500h12M1.500 0v12M10.500 0v12M2 3.500h7M3 5.500h7M2 8.500h8" stroke="#666" /><path d="M5 3h4v3H5z" fill="#666" /></Svg></ViewButton>
    <ViewButton aria-label="Design view"><Svg w={14} h={14}><path d="M.5 1v7H6L.500 1M1 10.500h12.500v3H1zM4 10v2M7 10v2M10 10v2" stroke="#666" /><path d="M13 1L7 7" stroke="#666" strokeWidth="2" /></Svg></ViewButton>
  </Status>
);

const OfficeIcon = ({ color, glyph, db }: { color: string; glyph: string; db?: boolean }) => (
  <Svg w={24} h={22}>
    {db ? (
      <><path d="M12 4q5-2 10 0v14q-5 2-10 0z" fill="#fff" /><path d="M12 7q5 2 10 0M12 11q5 2 10 0M12 15q5 2 10 0" stroke={color} strokeWidth="1.200" /></>
    ) : (
      <><path d="M12 3h10.500v16H12z" fill="#fff" stroke={color} /><path d="M13 6h9M13 9h9M13 12h9M13 15h9M18 4v14" stroke={color} /></>
    )}
    <path d="M0 2.500L13 0v22L0 19.500z" fill={color} />
    <text x="3" y="15" fontFamily="Open Sans, sans-serif" fontSize="11" fontWeight="700" fill="#fff">{glyph}</text>
  </Svg>
);

const TaskBar = () => (
  <Taskbar>
    <TaskButton aria-label="Start"><Svg w={16} h={16}><path d="M0 2.300L7 1.300v6.200H0zM8 1.100L16 0v7.500H8zM0 8.500h7v6.200l-7-1zM8 8.500h8V16l-8-1.100z" fill="#fff" /></Svg></TaskButton>
    <TaskButton aria-label="Search"><Svg w={17} h={17}><circle cx="10.500" cy="6.500" r="5.500" stroke="#fff" strokeWidth="1.400" /><path d="M6.500 10.500L1 16" stroke="#fff" strokeWidth="1.400" /></Svg></TaskButton>
    <TaskButton as="span" $width={16}><Divider /></TaskButton>
    <TaskButton as="span" $width={5} />
    <TaskButton $width={51} aria-label="Excel"><OfficeIcon color="#1f7244" glyph="X" /></TaskButton>
    <TaskButton $active $running aria-label="Access"><OfficeIcon color="#a4373a" glyph="A" db /></TaskButton>
    <TaskButton as="span" $width={5} />
    <TaskButton $running $width={40} aria-label="Paint">
      <Svg w={25} h={24}>
        <path d="M1 15Q0 9 5 6t11-3q7 1 7 7 0 8-6 11-4 2-6 0-1-2-3-1-6 2-7-5z" fill="#cfe6f4" stroke="#7fb2d2" />
        <circle cx="5" cy="11" r="2" fill="#e0503a" /><circle cx="9" cy="7.500" r="2" fill="#5fb04a" /><circle cx="14" cy="6.500" r="2" fill="#e8c23c" /><circle cx="11" cy="14" r="2.200" fill="#16354a" /><circle cx="5" cy="16" r="1.500" fill="#fff" />
        <path d="M12 23L20 6" stroke="#d8873a" strokeWidth="2" /><path d="M19 7l-1-5 3 1 2-3 1 4-3 4z" fill="#b98a52" />
      </Svg>
    </TaskButton>
    <Tray>
      <TrayButton as="span" $width={8}><Divider /></TrayButton>
      <TrayButton $width={44}>Links</TrayButton>
      <TrayButton $width={17} aria-label="Hidden icons"><Svg w={12} h={8}><path d="M1 6.500L6 1.500l5 5" stroke="#fff" strokeWidth="1.400" /></Svg></TrayButton>
      <TrayButton $width={30} aria-label="Volume"><Svg w={17} h={14}><path d="M1 5h2.500L7 1.500v11L3.500 9H1z" stroke="#fff" /><path d="M9 5q1 2 0 4M11.500 3q2.500 4 0 8M13.500 1.500q4 5.500 0 11" stroke="#fff" /></Svg></TrayButton>
      <TrayButton $width={18} aria-label="Network"><Svg w={17} h={17}><g stroke="#fff"><circle cx="8" cy="8" r="7" /><ellipse cx="8" cy="8" rx="3" ry="7" /><path d="M1 8h14M2.500 4h11M2.500 12h11" /></g><circle cx="12.500" cy="12.500" r="3.500" fill="#101010" stroke="#fff" /><path d="M10.500 10.500l4 4" stroke="#fff" /></Svg></TrayButton>
      <TrayButton $width={42}><span>ENG<br />IN</span></TrayButton>
      <TrayButton $width={64}><span>05:28<br />18/06/2021</span></TrayButton>
      <TrayButton $width={51} $end={6} aria-label="Notifications">
        <BadgeHost><Svg w={16} h={15}><path d="M0 0h16v12H9l-4 3v-3H0z" fill="#fff" /><path d="M3 3.500h10M3 6.500h10M3 9.500h6" stroke="#101010" /></Svg><Badge>7</Badge></BadgeHost>
      </TrayButton>
      <PeekEdge />
    </Tray>
  </Taskbar>
);

export default function App() {
  return (
    <Window>
      <Global />
      <Header />
      <RibbonBar />
      <QuickAccess />
      <Main>
        <Navigation />
        <Splitter />
        <Document />
      </Main>
      <StatusBar />
      <TaskBar />
      <Corner />
      <Watermark>
        <WatermarkTitle>Activate Windows</WatermarkTitle>
        <WatermarkText>Go to Settings to activate Windows.</WatermarkText>
      </Watermark>
    </Window>
  );
}
